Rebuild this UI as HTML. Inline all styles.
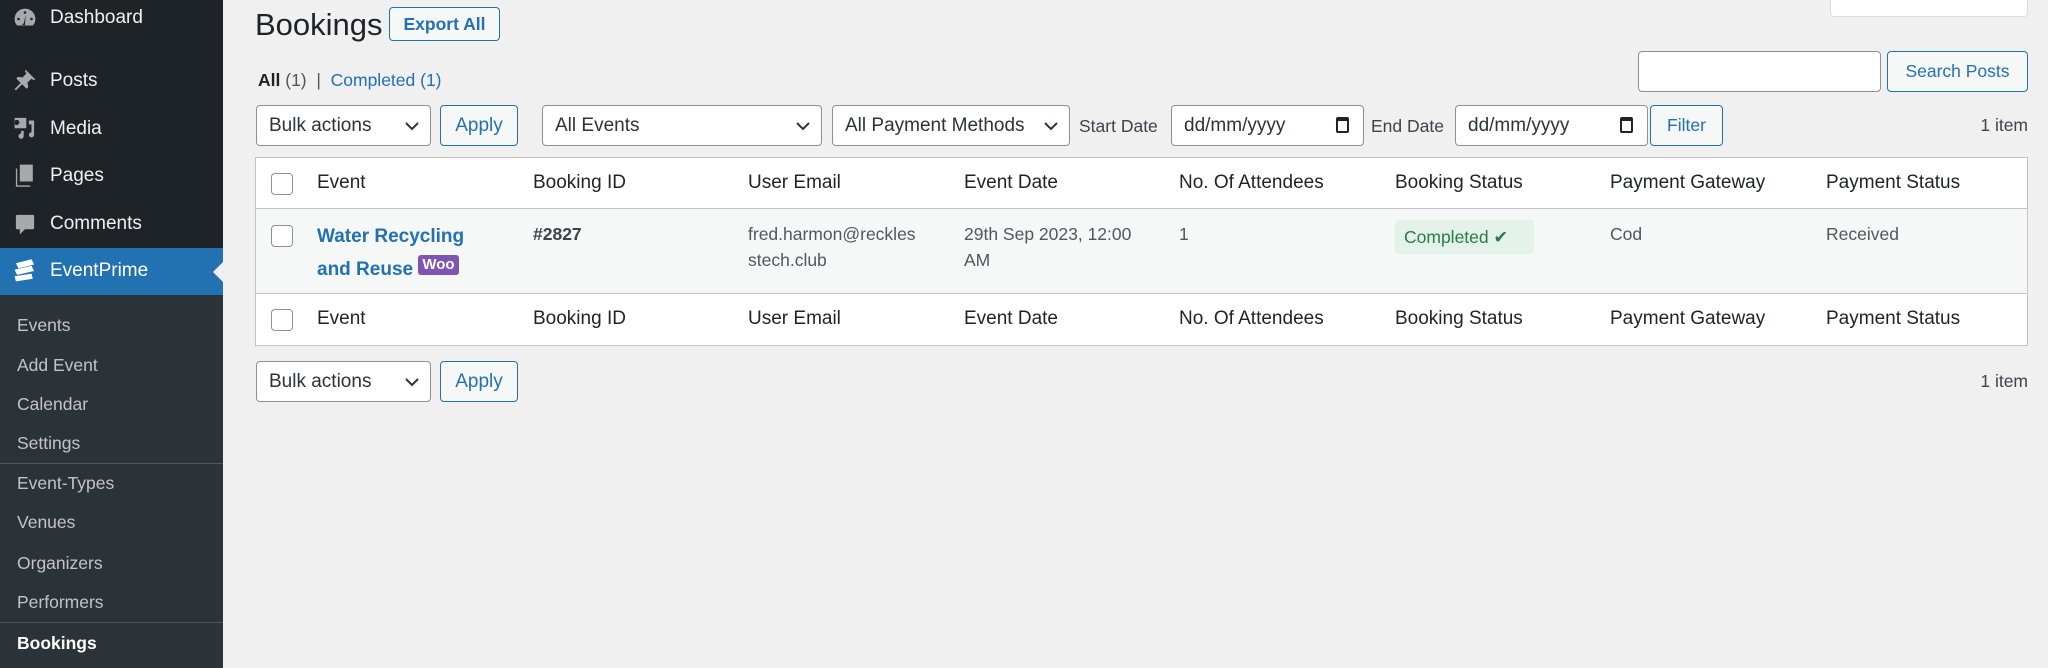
<!DOCTYPE html>
<html><head><meta charset="utf-8"><style>
*{box-sizing:border-box;margin:0;padding:0}
body{width:2048px;height:668px;background:#f0f0f1;font-family:"Liberation Sans",sans-serif;position:relative;overflow:hidden;color:#1d2327}
.a{position:absolute;white-space:nowrap}
#sb{position:absolute;left:0;top:0;width:223px;height:668px;background:#1d2327}
#sub{position:absolute;left:0;top:295px;width:223px;height:373px;background:#2c3338}
.mi{position:absolute;left:50px;font-size:19px;color:#f0f0f1}
.si{position:absolute;left:17px;font-size:17.5px;color:#c3c4c7}
.ic{position:absolute;left:12px;width:26px;height:26px;fill:#a7aaad}
.btn{position:absolute;border:1px solid #2271b1;border-radius:4px;color:#2271b1;background:#f6f7f7;font-size:17.5px;text-align:center}
.sel{position:absolute;border:1px solid #8c8f94;border-radius:4px;background:#fff;font-size:19px;color:#2c3338;padding-left:12px}
.sel svg{position:absolute;right:10px;top:15px}
.th{position:absolute;font-size:19px;color:#1d2327}
.td{position:absolute;font-size:17.5px;color:#50575e;line-height:26px}
.cb{position:absolute;left:271px;width:22px;height:22px;border:1px solid #8c8f94;border-radius:4px;background:#fff}
</style></head><body>
<div id="sb"></div>
<div id="sub"></div>
<svg class="ic" style="top:6px" viewBox="0 0 20 20"><path d="M10 2a8 8 0 0 0-8 8c0 2 .7 3.7 2 5h12c1.3-1.3 2-3 2-5a8 8 0 0 0-8-8zm0 2a1 1 0 1 1 0 2 1 1 0 0 1 0-2zM5 9a1 1 0 1 1 0 2 1 1 0 0 1 0-2zm10 0a1 1 0 1 1 0 2 1 1 0 0 1 0-2zm-4.5-2L10 14a1 1 0 1 1-1-.5z"/></svg>
<div class="mi" style="top:7px">Dashboard</div>
<svg class="ic" style="top:67px" viewBox="0 0 20 20"><path d="M10.4 2l7.6 7.6-1.4.4-1.7-1-3 3 .6 3.5-1.3 1.2-3.4-3.4L3 18l-1-1 4.7-4.8-3.4-3.4 1.2-1.3 3.5.6 3-3-1-1.7z"/></svg>
<div class="mi" style="top:70px">Posts</div>
<svg class="ic" style="top:114px" viewBox="0 0 20 20"><path d="M2 3h9v8H2zm3 2a2 2 0 1 0 0 3 2 2 0 0 0 0-3zm8 0h4v11a2 2 0 1 1-2-2V8h-2zM9 13v4a2 2 0 1 1-2-2v-2z"/></svg>
<div class="mi" style="top:118px">Media</div>
<svg class="ic" style="top:162px" viewBox="0 0 20 20"><path d="M6 2h10v13H6zM4 5v13h10v1H3V5z"/></svg>
<div class="mi" style="top:165px">Pages</div>
<svg class="ic" style="top:211px" viewBox="0 0 20 20"><path d="M4 3h12a1 1 0 0 1 1 1v9a1 1 0 0 1-1 1H10l-4 4v-4H4a1 1 0 0 1-1-1V4a1 1 0 0 1 1-1z"/></svg>
<div class="mi" style="top:213px">Comments</div>
<div class="a" style="left:0;top:248px;width:223px;height:47px;background:#2271b1"></div>
<div class="a" style="left:213px;top:262px;width:0;height:0;border-top:10px solid transparent;border-bottom:10px solid transparent;border-right:10px solid #f0f0f1"></div>
<svg class="ic" style="top:258px;fill:#fff" viewBox="0 0 20 20"><path d="M3 4l12-3 2 4-12 3zM2 9l13-3 2 4-13 3zM2 14l13-2 1 4-13 2z"/></svg>
<div class="mi" style="top:260px;color:#fff">EventPrime</div>
<div class="si" style="top:315px">Events</div>
<div class="si" style="top:355px">Add Event</div>
<div class="si" style="top:394px">Calendar</div>
<div class="si" style="top:433px">Settings</div>
<div class="a" style="left:0;top:463px;width:223px;height:1px;background:#50575e"></div>
<div class="si" style="top:473px">Event-Types</div>
<div class="si" style="top:512px">Venues</div>
<div class="si" style="top:553px">Organizers</div>
<div class="si" style="top:592px">Performers</div>
<div class="a" style="left:0;top:622px;width:223px;height:1px;background:#50575e"></div>
<div class="si" style="top:633px;color:#fff;font-weight:bold">Bookings</div>

<div class="a" style="left:255px;top:7px;font-size:31px;color:#1d2327">Bookings</div>
<div class="btn" style="left:389px;top:7px;width:111px;height:34px;line-height:32px;font-weight:bold;background:#f6f7f7">Export All</div>
<div class="a" style="left:1830px;top:-20px;width:198px;height:37px;border:1px solid #dcdcde;border-radius:0 0 4px 4px;background:#fff"></div>
<div class="a" style="left:258px;top:70px;font-size:17.5px;color:#50575e"><b style="color:#1d2327">All</b> (1) &nbsp;| &nbsp;<span style="color:#2271b1">Completed (1)</span></div>
<div class="a" style="left:1638px;top:51px;width:243px;height:41px;border:1px solid #8c8f94;border-radius:4px;background:#fff"></div>
<div class="btn" style="left:1887px;top:51px;width:141px;height:41px;line-height:39px">Search Posts</div>

<div class="sel" style="left:256px;top:105px;width:175px;height:41px;line-height:39px">Bulk actions<svg width="16" height="10" viewBox="0 0 16 10"><path d="M2 2l6 6 6-6" stroke="#2c3338" stroke-width="2" fill="none"/></svg></div>
<div class="btn" style="left:440px;top:105px;width:78px;height:41px;line-height:39px;font-size:19px">Apply</div>
<div class="sel" style="left:542px;top:105px;width:280px;height:41px;line-height:39px">All Events<svg width="16" height="10" viewBox="0 0 16 10"><path d="M2 2l6 6 6-6" stroke="#2c3338" stroke-width="2" fill="none"/></svg></div>
<div class="sel" style="left:832px;top:105px;width:238px;height:41px;line-height:39px">All Payment Methods<svg width="16" height="10" viewBox="0 0 16 10"><path d="M2 2l6 6 6-6" stroke="#2c3338" stroke-width="2" fill="none"/></svg></div>
<div class="a" style="left:1079px;top:116px;font-size:17.5px;color:#3c434a">Start Date</div>
<div class="sel" style="left:1171px;top:105px;width:193px;height:41px;line-height:39px">dd/mm/yyyy<span style="position:absolute;right:14px;top:11px;width:13px;height:16px;border:2px solid #1d2327;border-top-width:4px;border-radius:2px"></span></div>
<div class="a" style="left:1371px;top:116px;font-size:17.5px;color:#3c434a">End Date</div>
<div class="sel" style="left:1455px;top:105px;width:193px;height:41px;line-height:39px">dd/mm/yyyy<span style="position:absolute;right:14px;top:11px;width:13px;height:16px;border:2px solid #1d2327;border-top-width:4px;border-radius:2px"></span></div>
<div class="btn" style="left:1650px;top:105px;width:73px;height:41px;line-height:39px">Filter</div>
<div class="a" style="right:20px;top:115px;font-size:17.5px;color:#3c434a">1 item</div>

<div class="a" style="left:255px;top:157px;width:1773px;height:189px;border:1px solid #c3c4c7;background:#fff"></div>
<div class="a" style="left:256px;top:208px;width:1771px;height:86px;background:#f6f7f7;border-top:1px solid #c3c4c7;border-bottom:1px solid #c3c4c7"></div>
<div class="cb" style="top:173px"></div>
<div class="cb" style="top:225px"></div>
<div class="cb" style="top:309px"></div>
<div class="th" style="left:317px;top:172px">Event</div>
<div class="th" style="left:533px;top:172px">Booking ID</div>
<div class="th" style="left:748px;top:172px">User Email</div>
<div class="th" style="left:964px;top:172px">Event Date</div>
<div class="th" style="left:1179px;top:172px">No. Of Attendees</div>
<div class="th" style="left:1395px;top:172px">Booking Status</div>
<div class="th" style="left:1610px;top:172px">Payment Gateway</div>
<div class="th" style="left:1826px;top:172px">Payment Status</div>
<div class="th" style="left:317px;top:308px">Event</div>
<div class="th" style="left:533px;top:308px">Booking ID</div>
<div class="th" style="left:748px;top:308px">User Email</div>
<div class="th" style="left:964px;top:308px">Event Date</div>
<div class="th" style="left:1179px;top:308px">No. Of Attendees</div>
<div class="th" style="left:1395px;top:308px">Booking Status</div>
<div class="th" style="left:1610px;top:308px">Payment Gateway</div>
<div class="th" style="left:1826px;top:308px">Payment Status</div>

<div class="td" style="left:317px;top:220px;color:#2271b1;font-weight:bold;font-size:19px;line-height:33px">Water Recycling<br>and Reuse <span style="display:inline-block;background:#7f54b3;color:#fff;font-size:15px;line-height:20px;padding:0 4px;border-radius:3px;vertical-align:6px">Woo</span></div>
<div class="td" style="left:533px;top:221px;font-weight:bold;color:#3c434a">#2827</div>
<div class="td" style="left:748px;top:221px">fred.harmon@reckles<br>stech.club</div>
<div class="td" style="left:964px;top:221px">29th Sep 2023, 12:00<br>AM</div>
<div class="td" style="left:1179px;top:221px">1</div>
<div class="a" style="left:1395px;top:220px;width:139px;height:34px;background:#e4f3ea;border-radius:4px;color:#2a7a4a;font-size:17.5px;line-height:34px;padding-left:9px">Completed ✔</div>
<div class="td" style="left:1610px;top:221px">Cod</div>
<div class="td" style="left:1826px;top:221px">Received</div>

<div class="sel" style="left:256px;top:361px;width:175px;height:41px;line-height:39px">Bulk actions<svg width="16" height="10" viewBox="0 0 16 10"><path d="M2 2l6 6 6-6" stroke="#2c3338" stroke-width="2" fill="none"/></svg></div>
<div class="btn" style="left:440px;top:361px;width:78px;height:41px;line-height:39px;font-size:19px">Apply</div>
<div class="a" style="right:20px;top:371px;font-size:17.5px;color:#3c434a">1 item</div>
</body></html>
